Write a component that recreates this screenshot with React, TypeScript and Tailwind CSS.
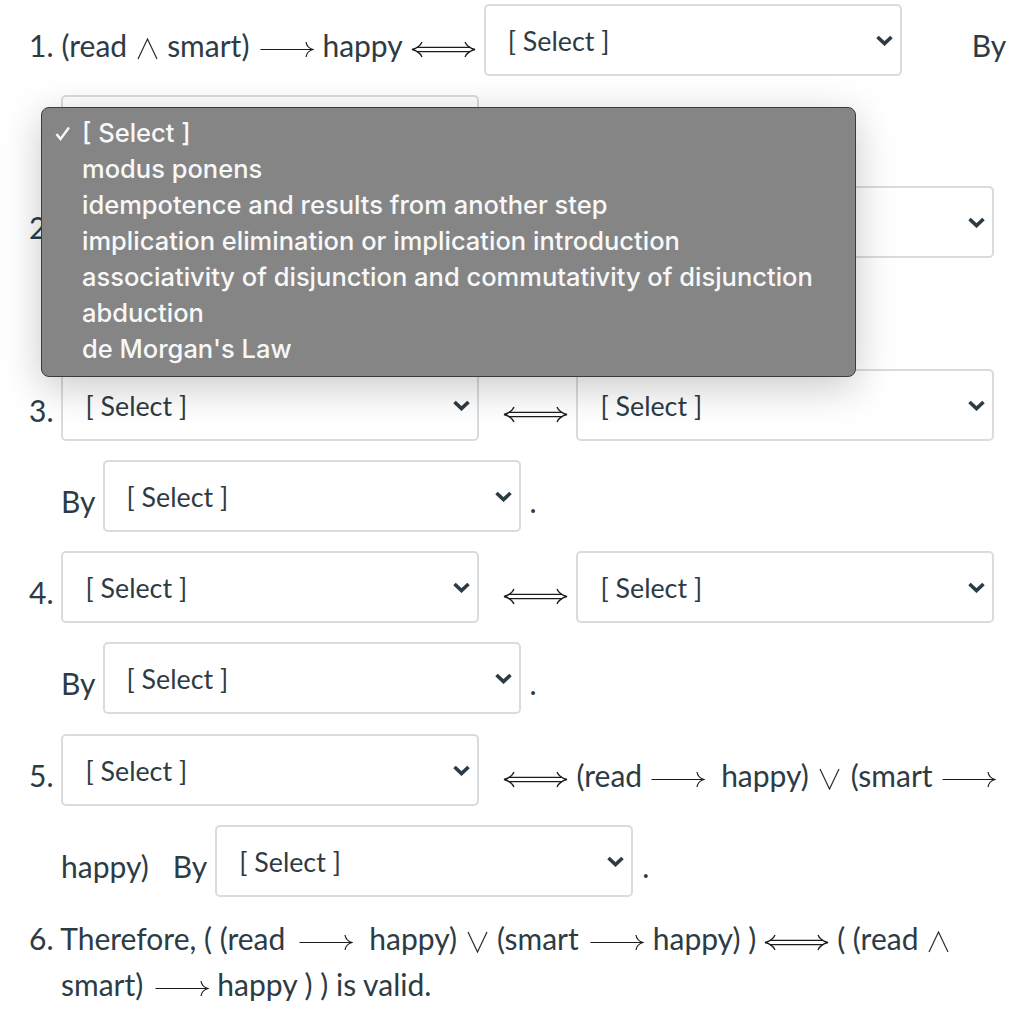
const Arrow = ({ className = "" }: { className?: string }) => (
  <svg width="54" height="18" viewBox="0 0 54 18" className={`mt-[36px] shrink-0 ${className}`} fill="none" stroke="#1c1c1c" strokeWidth="1.2">
    <path d="M0.5 9.5H52.5" />
    <path d="M46 2C46.5 5.5 49 8.4 53 9.5C49 10.6 46.5 13.5 46 17" />
  </svg>
);

const Iff = ({ className = "" }: { className?: string }) => (
  <svg width="65" height="18" viewBox="0 0 65 18" className={`mt-[36px] shrink-0 ${className}`} fill="none" stroke="#1c1c1c" strokeWidth="1.3">
    <path d="M6 7.4H59M6 11.6H59" />
    <path d="M11 2C9.5 5.5 5.5 8.4 1 9.5C5.5 10.6 9.5 13.5 11 17" />
    <path d="M54 2C55.5 5.5 59.5 8.4 64 9.5C59.5 10.6 55.5 13.5 54 17" />
  </svg>
);

const Wedge = ({ down = false, className = "" }: { down?: boolean; className?: string }) => (
  <svg width="21" height="22" viewBox="0 0 21 22" role="img" aria-label={down ? "or" : "and"} className={`mt-[34px] shrink-0 ${className}`} fill="none" stroke="#2a2a2a" strokeWidth="1.2">
    <path d={down ? "M1 1 10.5 21 20 1" : "M1 21 10.5 1 20 21"} />
  </svg>
);

const Chevron = () => (
  <svg width="17" height="11" viewBox="0 0 17 11" fill="none" stroke="#2d3b45" strokeWidth="3.6" className="mt-[29px] shrink-0">
    <path d="M1.5 2 8.5 8.6 15.5 2" />
  </svg>
);

const Select = ({ className = "" }: { className?: string }) => (
  <div className={`flex h-[72px] w-[418px] shrink-0 justify-between rounded-[5px] border-2 border-[#d9dbdc] bg-white pl-[22px] pr-[7px] ${className}`}>
    <span className="mt-[15px] text-[26.8px] leading-[40px] text-[#2d3b45]">[ Select ]</span>
    <Chevron />
  </div>
);

const T = ({ children, className = "" }: { children: React.ReactNode; className?: string }) => (
  <span className={`mt-[18px] shrink-0 whitespace-pre leading-[46px] ${className}`}>{children}</span>
);

const Row = ({ children }: { children: React.ReactNode }) => (
  <div className="flex h-[91.2px] items-start">{children}</div>
);

const TextRow = ({ children, className = "" }: { children: React.ReactNode; className?: string }) => (
  <div className={`-mt-[19px] flex h-[65px] items-start ${className}`}>{children}</div>
);

const options = [
  "[ Select ]",
  "modus ponens",
  "idempotence and results from another step",
  "implication elimination or implication introduction",
  "associativity of disjunction and commutativity of disjunction",
  "abduction",
  "de Morgan's Law",
];

export default function App() {
  return (
    <div className="relative h-[1018px] w-[1024px] overflow-hidden bg-white pl-[29px] pt-[4px] font-['Lato',sans-serif] text-[30px] text-[#2d3b45]">
      <Row>
        <T>1.</T>
        <T className="ml-[8px]">(read</T>
        <Wedge className="ml-[10px]" />
        <T className="ml-[9px]">smart)</T>
        <Arrow className="ml-[11px]" />
        <T className="ml-[8px]">happy</T>
        <Iff className="ml-[8px]" />
        <Select className="ml-[8px]" />
        <T className="ml-[70px]">By</T>
      </Row>
      <Row>
        <Select className="ml-[32px]" />
      </Row>
      <Row>
        <T>2.</T>
        <Select className="ml-[8px]" />
        <Iff className="ml-[24px]" />
        <Select className="ml-[8px]" />
      </Row>
      <Row>
        <T className="ml-[32px]">By</T>
        <Select className="ml-[7px]" />
      </Row>
      <Row>
        <T>3.</T>
        <Select className="ml-[8px]" />
        <Iff className="ml-[24px]" />
        <Select className="ml-[8px]" />
      </Row>
      <Row>
        <T className="ml-[32px]">By</T>
        <Select className="ml-[7px]" />
        <T className="ml-[9px]">.</T>
      </Row>
      <Row>
        <T>4.</T>
        <Select className="ml-[8px]" />
        <Iff className="ml-[24px]" />
        <Select className="ml-[8px]" />
      </Row>
      <Row>
        <T className="ml-[32px]">By</T>
        <Select className="ml-[7px]" />
        <T className="ml-[9px]">.</T>
      </Row>
      <Row>
        <T>5.</T>
        <Select className="ml-[8px]" />
        <Iff className="ml-[24px]" />
        <T className="ml-[8px]">(read</T>
        <Arrow className="ml-[9px]" />
        <T className="ml-[16px]">happy)</T>
        <Wedge down className="ml-[10px]" />
        <T className="ml-[11px]">(smart</T>
        <Arrow className="ml-[9px]" />
      </Row>
      <Row>
        <T className="ml-[32px]">happy)</T>
        <T className="ml-[24px]">By</T>
        <Select className="ml-[8px]" />
        <T className="ml-[9px]">.</T>
      </Row>
      <TextRow>
        <T>6. Therefore, ( (read</T>
        <Arrow className="ml-[14px]" />
        <T className="ml-[16px]">happy)</T>
        <Wedge down className="ml-[10px]" />
        <T className="ml-[9px]">(smart</T>
        <Arrow className="ml-[11px]" />
        <T className="ml-[9px]">happy) )</T>
        <Iff className="ml-[8px]" />
        <T className="ml-[8px]">( (read</T>
        <Wedge className="ml-[10px]" />
      </TextRow>
      <TextRow className="pl-[32px]">
        <T>smart)</T>
        <Arrow className="ml-[12px]" />
        <T className="ml-[8px]">happy ) ) is valid.</T>
      </TextRow>

      <div className="absolute left-[41px] top-[107px] h-[270px] w-[815px] rounded-[8px] border border-[#3c3c3c] bg-[#858585] pl-[40px] pt-[7px] font-['Inter',sans-serif] text-[25.5px] font-medium leading-[36px] text-[#f8f8f8] shadow-[0_10px_40px_rgba(0,0,0,0.22)]">
        <svg width="16" height="15" viewBox="0 0 16 15" fill="none" stroke="#f8f8f8" strokeWidth="2.4" className="absolute left-[13px] top-[18px]">
          <path d="M1.5 8 5.5 13 14 1.5" />
        </svg>
        {options.map((o) => (
          <div key={o} className="whitespace-pre">{o}</div>
        ))}
      </div>
    </div>
  );
}
